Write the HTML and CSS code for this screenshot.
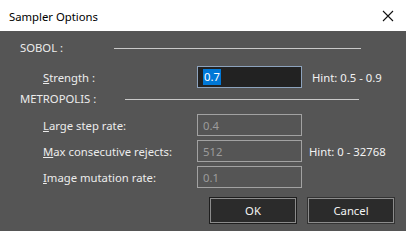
FILE: index.html
```html
<!DOCTYPE html>
<html lang="en">
<head>
    <meta charset="UTF-8">
    <title>Sampler Options</title>
    <link rel="stylesheet" href="styles.css">
</head>
<body>

    <!-- Barra de titulo -->
    <div class="titlebar">
        <span class="title">Sampler Options</span>
        <svg class="close" width="12" height="12" viewBox="0 0 12 12">
            <path d="M1 1 L11 11 M11 1 L1 11" stroke="#111" stroke-width="1.1" fill="none"/>
        </svg>
    </div>

    <div class="dialog">
        <div class="section sobol">
            <span>SOBOL :</span>
            <div class="rule"></div>
        </div>
        <div class="row first">
            <label class="label"><u>S</u>trength :</label>
            <div class="field active"><span class="sel">0.7</span></div>
            <span class="hint">Hint: 0.5 - 0.9</span>
        </div>

        <div class="section metro">
            <span>METROPOLIS :</span>
            <div class="rule"></div>
        </div>
        <div class="row">
            <label class="label"><u>L</u>arge step rate:</label>
            <div class="field disabled">0.4</div>
        </div>
        <div class="row">
            <label class="label"><u>M</u>ax consecutive rejects:</label>
            <div class="field disabled">512</div>
            <span class="hint small">Hint: 0 - 32768</span>
        </div>
        <div class="row">
            <label class="label"><u>I</u>mage mutation rate:</label>
            <div class="field disabled">0.1</div>
        </div>

        <div class="buttons">
            <button class="btn default">OK</button>
            <button class="btn">Cancel</button>
        </div>
    </div>

</body>
</html>
```

FILE: styles.css
```css
body {
    margin: 0;
    width: 406px;
    height: 231px;
    background: #555555;
    font-family: 'Noto Sans', 'Open Sans', sans-serif;
    font-size: 11.3px;
    color: #ececec;
    overflow: hidden;
}

.titlebar {
    height: 31px;
    background: #ffffff;
    display: flex;
    align-items: center;
    justify-content: space-between;
    padding: 0 12px 0 9px;
}
.title {
    color: #000;
    font-size: 11.3px;
    margin-top: 1px;
}

.dialog {
    padding: 6px 0 0 20px;
}

/* Cabeceras de seccion con la linea */
.section {
    height: 20px;
    display: flex;
    align-items: center;
}
.section .rule {
    height: 1px;
    background: #c9c9c9;
    margin-top: 3px;
}
.sobol .rule {
    margin-left: 51px;
    width: 247px;
}
.metro .rule {
    margin-left: 29px;
    width: 234px;
}

.row {
    display: flex;
    align-items: center;
    height: 22px;
    padding-left: 23px;
    margin-top: 4px;
}
.section + .row {
    margin-top: 6px;
}
.row.first {
    margin-top: 9px;
}
.label {
    width: 154px;
}

.field {
    box-sizing: border-box;
    width: 105px;
    height: 22px;
    padding: 0 5px;
    display: flex;
    align-items: center;
}
.field.active {
    background: #222222;
    border: 1px solid #8da3bd;
    color: #fff;
}
.field.active .sel {
    background: #0078d7;
    color: #fff;
    padding: 0 1px;
    line-height: 16px;
}
.field.disabled {
    border: 1px solid #a2a2a2;
    color: #9c9c9c;
}

.hint {
    margin-left: 10px;
    color: #f2f2f2;
}
.hint.small {
    margin-left: 7px;
}

.buttons {
    display: flex;
    justify-content: flex-end;
    gap: 12px;
    padding-right: 12px;
    margin-top: 10px;
}
.btn {
    width: 86px;
    height: 25px;
    background: #2b2b2b;
    border: 1px solid #8c8c8c;
    box-shadow: 0 0 0 1px #333;
    color: #f4f4f4;
    font-family: 'Noto Sans', 'Open Sans', sans-serif;
    font-size: 11.3px;
    padding: 0;
}
.btn.default {
    box-shadow: 0 0 0 1px #1e1e1e;
}
```
